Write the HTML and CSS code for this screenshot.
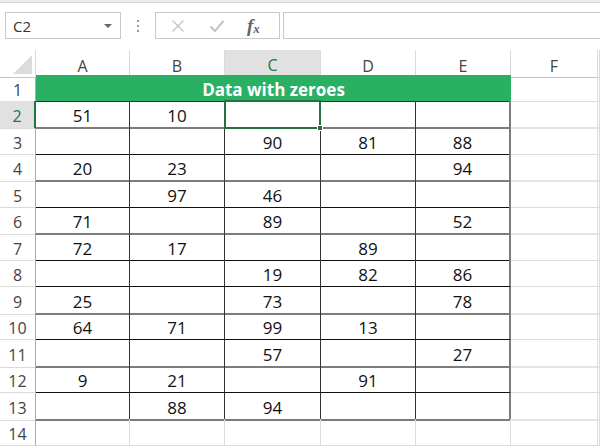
FILE: index.html
```html
<!DOCTYPE html>
<html>
<head>
<meta charset="utf-8">
<link rel="stylesheet" href="styles.css">
</head>
<body>
<div class="top-strip"></div>
<div class="formula-row">
  <div class="name-box"><span class="name-text">C2</span><span class="dd-arrow"></span></div>
  <div class="grip"><i></i><i></i><i></i></div>
  <div class="fx-buttons">
    <svg class="btn-icon" width="14" height="14" viewBox="0 0 14 14"><path d="M1.5 1.5 L12.5 12.5 M12.5 1.5 L1.5 12.5" stroke="#c4c4c4" stroke-width="1.4" fill="none"/></svg>
    <svg class="btn-icon" width="16" height="14" viewBox="0 0 16 14"><path d="M1.5 7.5 L6 12 L14.5 2" stroke="#c4c4c4" stroke-width="2" fill="none"/></svg>
    <span class="fx-label">f<sub>x</sub></span>
  </div>
  <div class="formula-input"></div>
</div>

<div class="sheet">
  <div class="row hdr">
    <div class="corner"><span class="tri"></span></div>
    <div class="ch">A</div><div class="ch">B</div><div class="ch sel">C</div><div class="ch">D</div><div class="ch">E</div><div class="ch">F</div><div class="ch"></div>
  </div>
  <div class="row h26">
    <div class="rh">1</div>
    <div class="band">Data with zeroes</div>
    <div class="c"></div><div class="c"></div>
  </div>
  <div class="row h27 g">
    <div class="rh sel">2</div>
    <div class="c t">51</div><div class="c t">10</div><div class="c t cur"><span class="handle"></span></div><div class="c t"></div><div class="c t e"></div><div class="c"></div><div class="c"></div>
  </div>
  <div class="row h26">
    <div class="rh">3</div>
    <div class="c t"></div><div class="c t"></div><div class="c t">90</div><div class="c t">81</div><div class="c t e">88</div><div class="c"></div><div class="c"></div>
  </div>
  <div class="row h27 g">
    <div class="rh">4</div>
    <div class="c t">20</div><div class="c t">23</div><div class="c t"></div><div class="c t"></div><div class="c t e">94</div><div class="c"></div><div class="c"></div>
  </div>
  <div class="row h26">
    <div class="rh">5</div>
    <div class="c t"></div><div class="c t">97</div><div class="c t">46</div><div class="c t"></div><div class="c t e"></div><div class="c"></div><div class="c"></div>
  </div>
  <div class="row h27 g">
    <div class="rh">6</div>
    <div class="c t">71</div><div class="c t"></div><div class="c t">89</div><div class="c t"></div><div class="c t e">52</div><div class="c"></div><div class="c"></div>
  </div>
  <div class="row h26">
    <div class="rh">7</div>
    <div class="c t">72</div><div class="c t">17</div><div class="c t"></div><div class="c t">89</div><div class="c t e"></div><div class="c"></div><div class="c"></div>
  </div>
  <div class="row h27">
    <div class="rh">8</div>
    <div class="c t"></div><div class="c t"></div><div class="c t">19</div><div class="c t">82</div><div class="c t e">86</div><div class="c"></div><div class="c"></div>
  </div>
  <div class="row h26 g">
    <div class="rh">9</div>
    <div class="c t">25</div><div class="c t"></div><div class="c t">73</div><div class="c t"></div><div class="c t e">78</div><div class="c"></div><div class="c"></div>
  </div>
  <div class="row h27">
    <div class="rh">10</div>
    <div class="c t">64</div><div class="c t">71</div><div class="c t">99</div><div class="c t">13</div><div class="c t e"></div><div class="c"></div><div class="c"></div>
  </div>
  <div class="row h26 g">
    <div class="rh">11</div>
    <div class="c t"></div><div class="c t"></div><div class="c t">57</div><div class="c t"></div><div class="c t e">27</div><div class="c"></div><div class="c"></div>
  </div>
  <div class="row h27">
    <div class="rh">12</div>
    <div class="c t">9</div><div class="c t">21</div><div class="c t"></div><div class="c t">91</div><div class="c t e"></div><div class="c"></div><div class="c"></div>
  </div>
  <div class="row h26 g">
    <div class="rh">13</div>
    <div class="c t"></div><div class="c t">88</div><div class="c t">94</div><div class="c t"></div><div class="c t e"></div><div class="c"></div><div class="c"></div>
  </div>
  <div class="row h27">
    <div class="rh">14</div>
    <div class="c"></div><div class="c"></div><div class="c"></div><div class="c"></div><div class="c"></div><div class="c"></div><div class="c"></div>
  </div>
</div>
</body>
</html>
```

FILE: styles.css
```css
* { box-sizing: border-box; }
html, body { margin: 0; padding: 0; background: #fff; overflow: hidden; }
body { font-family: "Open Sans", "Liberation Sans", sans-serif; color: #222; width: 600px; height: 447px; }

.top-strip { height: 3px; background: #ececec; border-bottom: 1px solid #d6d6d6; }

.formula-row { display: flex; align-items: stretch; height: 27px; margin-top: 9px; padding-left: 5px; }
.name-box { width: 116px; border: 1px solid #c8c8c8; display: flex; align-items: center; justify-content: space-between; padding: 0 8px 0 7px; }
.name-text { font-size: 15px; color: #333; }
.dd-arrow { width: 0; height: 0; border-left: 4px solid transparent; border-right: 4px solid transparent; border-top: 4px solid #666; }
.grip { width: 34px; display: flex; flex-direction: column; align-items: center; justify-content: center; gap: 3px; }
.grip i { display: block; width: 2px; height: 2px; background: #999; }
.fx-buttons { width: 125px; border: 1px solid #c8c8c8; display: flex; align-items: center; padding-left: 15px; }
.btn-icon { margin-right: 24px; }
.fx-label { font-family: "Liberation Serif", serif; font-style: italic; font-weight: 700; font-size: 19px; color: #666; line-height: 1; margin-left: -2px; }
.fx-label sub { font-size: 13px; vertical-align: -1px; }
.formula-input { flex: 1; margin-left: 3px; border: 1px solid #c8c8c8; border-right: none; }

.sheet { margin-top: 11px; }
.row { display: grid; grid-template-columns: 36px 94px 95px 96px 95px 95px 87px 1fr; }
.hdr { height: 25px; }
.h26 { height: 26px; }
.h27 { height: 27px; }

.corner { position: relative; border-right: 1px solid #d8d8d8; border-bottom: 1px solid #c4c4c4; }
.tri { position: absolute; right: 3px; bottom: 3px; width: 0; height: 0; border-left: 19px solid transparent; border-bottom: 19px solid #dcdcdc; }
.ch { display: flex; align-items: center; justify-content: center; font-size: 16px; color: #444; border-right: 1px solid #dadada; border-bottom: 1px solid #c4c4c4; padding-top: 4px; }
.ch.sel { background: #e1e1e1; color: #217346; border-bottom: 2px solid #217346; }

.rh { display: flex; align-items: center; justify-content: center; font-size: 16px; color: #444; border-right: 1px solid #ababab; border-bottom: 1px solid #dadada; padding-top: 3px; }
.rh.sel { background: #e1e1e1; color: #217346; border-right: 2px solid #217346; }

.band { grid-column: span 5; background: #29b063; color: #fff; font-weight: 700; font-size: 17px; display: flex; align-items: center; justify-content: center; border-bottom: 1px solid #1f3a2a; padding-top: 3px; }

.c { display: flex; align-items: center; justify-content: center; font-size: 17px; color: #111; border-right: 1px solid #dcdcdc; border-bottom: 1px solid #dcdcdc; padding-top: 3px; }
.c.t { border-right: 1px solid #333; border-bottom: 1px solid #111; }
.c.t.e { border-right: 2px solid #7c7c7c; }
.g .c { border-bottom-width: 2px; border-bottom-color: #e4e4e4; }
.g .c.t { border-bottom-color: #7c7c7c; }

.cur { position: relative; }
.cur::after { content: ""; position: absolute; left: -1px; top: -1px; right: -1px; bottom: -2px; border: 2px solid #217346; }
.handle { position: absolute; right: -3px; bottom: -4px; width: 6px; height: 6px; background: #217346; border: 1px solid #fff; z-index: 2; }
```
